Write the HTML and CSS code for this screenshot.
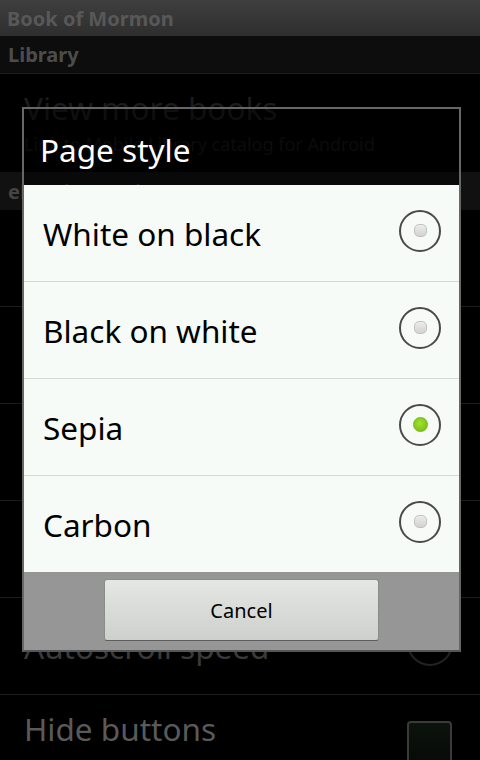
FILE: index.html
```html
<!DOCTYPE html>
<html>
<head>
<meta charset="utf-8">
<link rel="stylesheet" href="styles.css">
</head>
<body>
<div class="screen">
  <div class="titlebar">Book of Mormon</div>
  <div class="header">Library</div>
  <div class="more">
    <div class="more-title">View more books</div>
    <div class="more-sub">Link to Mobile Library catalog for Android</div>
  </div>
  <div class="section">eReader settings</div>
  <div class="row"></div>
  <div class="row"></div>
  <div class="row"></div>
  <div class="row"></div>
  <div class="row row-auto">
    <div class="auto-text">Autoscroll speed</div>
    <div class="knob"></div>
  </div>
  <div class="row row-hide">
    <div class="hide-texts">
      <div class="hide-title">Hide buttons</div>
      <div class="hide-sub">When reading, hide the toolbar buttons</div>
    </div>
    <div class="check"></div>
  </div>

  <div class="dialog">
    <div class="dlg-title">Page style</div>
    <div class="dlg-list">
      <div class="item"><span class="label">White on black</span><span class="radio"><span class="dot"></span></span></div>
      <div class="item"><span class="label">Black on white</span><span class="radio"><span class="dot"></span></span></div>
      <div class="item"><span class="label">Sepia</span><span class="radio"><span class="dot on"></span></span></div>
      <div class="item"><span class="label">Carbon</span><span class="radio"><span class="dot"></span></span></div>
    </div>
    <div class="dlg-buttons">
      <div class="btn">Cancel</div>
    </div>
  </div>
</div>
</body>
</html>
```
FILE: styles.css
```css
html, body {
  margin: 0;
  padding: 0;
  background: #000;
}
.screen {
  position: relative;
  width: 480px;
  height: 760px;
  overflow: hidden;
  background: #000;
  font-family: "Noto Sans", "Open Sans", sans-serif;
}
.titlebar {
  height: 36px;
  box-sizing: border-box;
  padding-left: 7px;
  display: flex;
  align-items: center;
  background: linear-gradient(#3f3f3f, #2e2e2e);
  color: #585858;
  font-weight: bold;
  font-size: 20px;
}
.header {
  height: 38px;
  box-sizing: border-box;
  padding-left: 8px;
  display: flex;
  align-items: center;
  background: #0d0d0d;
  border-bottom: 1px solid #1c1c1c;
  color: #4c4c4c;
  font-weight: bold;
  font-size: 20px;
}
.more {
  height: 98px;
  box-sizing: border-box;
  padding: 16px 0 0 24px;
}
.more-title {
  font-size: 31.5px;
  line-height: 36px;
  color: #1c1c1c;
}
.more-sub {
  margin-top: 7px;
  font-size: 18px;
  line-height: 22px;
  color: #161616;
  white-space: nowrap;
}
.section {
  height: 38px;
  box-sizing: border-box;
  padding-left: 8px;
  display: flex;
  align-items: center;
  background: #111;
  color: #444;
  font-weight: bold;
  font-size: 20px;
}
.row {
  height: 97px;
  box-sizing: border-box;
  border-bottom: 1px solid #1b1b1b;
  padding: 0 24px;
  display: flex;
  align-items: center;
  justify-content: space-between;
}
.row-auto {
  align-items: flex-start;
  padding-top: 31px;
}
.auto-text {
  font-size: 31.5px;
  line-height: 36px;
  color: #3a3a3a;
}
.knob {
  width: 42px;
  height: 42px;
  border: 2px solid #222;
  border-radius: 50%;
  margin: -9px 3px 0 0;
}
.row-hide {
  align-items: flex-start;
  padding-top: 16px;
  border-bottom: none;
  padding-right: 28px;
}
.hide-title {
  font-size: 31.5px;
  line-height: 36px;
  color: #5a5a5a;
}
.hide-sub {
  font-size: 18px;
  line-height: 22px;
  color: #3a3a3a;
  margin-top: 9px;
  white-space: nowrap;
}
.check {
  width: 41px;
  height: 44px;
  margin-top: 10px;
  border: 2px solid #3a3a3a;
  border-radius: 4px;
  background: linear-gradient(#0c120c, #070a07);
}

.dialog {
  position: absolute;
  left: 22px;
  top: 107px;
  width: 439px;
  height: 545px;
  box-sizing: border-box;
  border: 2px solid #676767;
  border-bottom-color: #555;
  display: flex;
  flex-direction: column;
}
.dlg-title {
  height: 76px;
  box-sizing: border-box;
  padding: 23px 0 0 16px;
  background: rgba(0, 0, 0, 0.45);
  color: #fff;
  font-size: 31.5px;
  line-height: 36px;
}
.dlg-list {
  background: #f7fbf7;
}
.item {
  height: 97px;
  box-sizing: border-box;
  border-top: 1px solid #d6dad6;
  display: flex;
  align-items: center;
  justify-content: space-between;
  padding: 2px 18px 0 19px;
}
.item:first-child {
  border-top: none;
  height: 96px;
}
.label {
  color: #000;
  font-size: 31.5px;
  line-height: 36px;
}
.radio {
  width: 38px;
  height: 38px;
  margin-bottom: 7px;
  border: 2px solid #4a4a4a;
  border-radius: 50%;
  display: flex;
  align-items: center;
  justify-content: center;
}
.dot {
  width: 13px;
  height: 13px;
  border-radius: 5px;
  box-sizing: border-box;
  border: 1px solid #c2c2c2;
  background: linear-gradient(#ececec, #d2d2d2);
}
.dot.on {
  width: 15px;
  height: 15px;
  border-radius: 50%;
  border: 1px solid #76b815;
  background: radial-gradient(circle at 45% 40%, #a5e034, #7cc516 70%, #6fb210);
}
.dlg-buttons {
  flex: 1;
  background: #959695;
  display: flex;
  justify-content: center;
  align-items: flex-start;
  padding-top: 7px;
}
.btn {
  width: 275px;
  height: 62px;
  box-sizing: border-box;
  border: 1px solid #8a8c8a;
  border-bottom-color: #5e5e5e;
  border-radius: 3px;
  background: linear-gradient(#e5e7e5, #cdd0cd);
  display: flex;
  align-items: center;
  justify-content: center;
  font-size: 20px;
  color: #000;
}
```
